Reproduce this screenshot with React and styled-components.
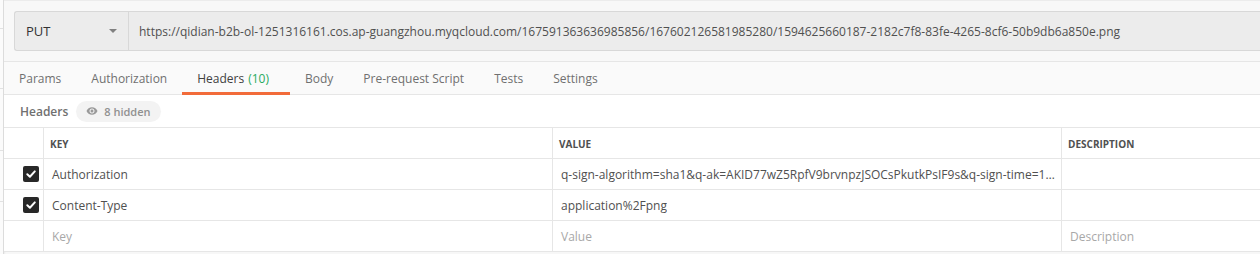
import React from 'react';
import styled, { createGlobalStyle } from 'styled-components';

const GlobalStyle = createGlobalStyle`
  html, body {
    margin: 0;
    padding: 0;
    background: #f7f7f7;
  }
  body {
    font-family: "Open Sans", "Liberation Sans", sans-serif;
    font-size: 12px;
    color: #505050;
  }
`;

const Page = styled.div`
  display: flex;
  width: 1260px;
  height: 254px;
  overflow: hidden;
`;

const SideStrip = styled.div`
  width: 3px;
  flex-shrink: 0;
  display: flex;
  flex-direction: column;
  background: #fbfbfb;
  border-right: 1px solid #dcdcdc;
  box-shadow: 1px 0 2px rgba(0, 0, 0, 0.06);
`;

const StripCell = styled.div`
  height: ${(p) => p.h}px;
  flex-shrink: 0;
  border-bottom: 1px solid #e2e2e2;
`;

const Main = styled.div`
  flex: 1;
  min-width: 0;
  display: flex;
  flex-direction: column;
`;

const RequestSection = styled.div`
  background: #f8f8f8;
  border-top: 1px solid #ececec;
  padding: 10px 0 10px 10px;
`;

const UrlBar = styled.div`
  display: flex;
  height: 38px;
  background: #ececec;
  border: 1px solid #d8d8d8;
  border-right: none;
  border-radius: 3px 0 0 3px;
`;

const MethodSelect = styled.div`
  width: 114px;
  flex-shrink: 0;
  display: flex;
  align-items: center;
  justify-content: space-between;
  padding: 0 11px 0 11px;
  box-sizing: border-box;
  border-right: 1px solid #d8d8d8;
  font-size: 13px;
  color: #333;
`;

const Caret = styled.span`
  width: 0;
  height: 0;
  border-left: 4px solid transparent;
  border-right: 4px solid transparent;
  border-top: 4px solid #808080;
`;

const UrlText = styled.div`
  flex: 1;
  display: flex;
  align-items: center;
  padding-left: 10px;
  white-space: nowrap;
  overflow: hidden;
  color: #505050;
`;

const TabBar = styled.div`
  display: flex;
  height: 32px;
  background: #fafafa;
  border-top: 1px solid #e6e6e6;
  border-bottom: 1px solid #e6e6e6;
`;

const Tab = styled.div`
  display: flex;
  align-items: center;
  padding: 0 ${(p) => (p.active ? 21 : 15)}px 0 15px;
  color: ${(p) => (p.active ? '#404040' : '#707070')};
  border-bottom: 3px solid ${(p) => (p.active ? '#f26b3a' : 'transparent')};
  margin-bottom: -1px;
  padding-top: 2px;
  white-space: nowrap;
`;

const Count = styled.span`
  color: #2bab5e;
  margin-left: 4px;
`;

const SectionHead = styled.div`
  display: flex;
  align-items: center;
  height: 32px;
  background: #fff;
  padding-left: 16px;
  gap: 8px;
`;

const SectionTitle = styled.span`
  color: #707070;
  font-weight: 600;
`;

const HiddenPill = styled.span`
  display: inline-flex;
  align-items: center;
  gap: 6px;
  height: 21px;
  padding: 0 10px;
  border-radius: 11px;
  background: #f3f3f3;
  color: #909090;
  font-weight: 600;
  font-size: 11px;
`;

const Table = styled.div`
  display: grid;
  grid-template-columns: 40px 509px 509px 1fr;
  background: #fff;
  border-top: 1px solid #e6e6e6;
`;

const Cell = styled.div`
  height: 30px;
  display: flex;
  align-items: center;
  padding: 0 ${(p) => (p.tight ? 1 : 8)}px 0 8px;
  box-sizing: content-box;
  border-bottom: 1px solid #e6e6e6;
  border-right: ${(p) => (p.last ? 'none' : '1px solid #e6e6e6')};
  color: ${(p) => (p.placeholder ? '#a8a8a8' : '#505050')};
  white-space: nowrap;
  overflow: hidden;
  min-width: 0;
`;

const HeadCell = styled(Cell)`
  font-size: 10px;
  font-weight: 700;
  padding-left: 6px;
  padding-top: 1px;
  height: 29px;
`;

const CheckCell = styled(Cell)`
  justify-content: flex-end;
  padding: 0 4px 0 0;
`;

const Ellipsis = styled.span`
  overflow: hidden;
  text-overflow: ellipsis;
  white-space: nowrap;
  display: block;
  min-width: 0;
`;

const CheckBox = styled.span`
  width: 16px;
  height: 16px;
  border-radius: 2px;
  background: #282828;
  display: flex;
  align-items: center;
  justify-content: center;
`;

const EyeIcon = () => (
  <svg width="12" height="12" viewBox="0 0 24 24" fill="#9a9a9a">
    <path d="M12 4.5C7 4.5 2.73 7.61 1 12c1.73 4.39 6 7.5 11 7.5s9.27-3.11 11-7.5c-1.73-4.39-6-7.5-11-7.5zM12 17c-2.76 0-5-2.24-5-5s2.24-5 5-5 5 2.24 5 5-2.24 5-5 5zm0-8c-1.66 0-3 1.34-3 3s1.34 3 3 3 3-1.34 3-3-1.34-3-3-3z" />
  </svg>
);

const Check = () => (
  <CheckBox>
    <svg width="12" height="12" viewBox="0 0 12 12">
      <path d="M2.3 6.2 L4.9 8.7 L9.8 3.4" stroke="#fff" strokeWidth="2" fill="none" strokeLinecap="round" strokeLinejoin="round" />
    </svg>
  </CheckBox>
);

const tabs = ['Params', 'Authorization', 'Headers', 'Body', 'Pre-request Script', 'Tests', 'Settings'];

const url =
  'https://qidian-b2b-ol-1251316161.cos.ap-guangzhou.myqcloud.com/167591363636985856/167602126581985280/1594625660187-2182c7f8-83fe-4265-8cf6-50b9db6a850e.png';

const authValue =
  'q-sign-algorithm=sha1&q-ak=AKID77wZ5RpfV9brvnpzJSOCsPkutkPsIF9s&q-sign-time=1594625660;1594629260&q-key-time=1594625660;1594629260&q-header-list=&q-url-param-list=&q-signature=';

const rows = [
  { key: 'Authorization', value: authValue },
  { key: 'Content-Type', value: 'application%2Fpng' },
];

const App = () => (
  <>
    <GlobalStyle />
    <Page>
      <SideStrip>
        <StripCell h={28} />
        <StripCell h={59} />
        <StripCell h={61} />
        <StripCell h={50} />
      </SideStrip>
      <Main>
        <RequestSection>
          <UrlBar>
            <MethodSelect>
              PUT
              <Caret />
            </MethodSelect>
            <UrlText>{url}</UrlText>
          </UrlBar>
        </RequestSection>

        <TabBar>
          {tabs.map((t) => (
            <Tab key={t} active={t === 'Headers'}>
              {t}
              {t === 'Headers' && <Count>(10)</Count>}
            </Tab>
          ))}
        </TabBar>

        <SectionHead>
          <SectionTitle>Headers</SectionTitle>
          <HiddenPill>
            <EyeIcon />
            8 hidden
          </HiddenPill>
        </SectionHead>

        <Table>
          <HeadCell />
          <HeadCell>KEY</HeadCell>
          <HeadCell>VALUE</HeadCell>
          <HeadCell last>DESCRIPTION</HeadCell>

          {rows.map((r) => (
            <React.Fragment key={r.key}>
              <CheckCell>
                <Check />
              </CheckCell>
              <Cell>{r.key}</Cell>
              <Cell tight>
                <Ellipsis>{r.value}</Ellipsis>
              </Cell>
              <Cell last />
            </React.Fragment>
          ))}

          <CheckCell />
          <Cell placeholder>Key</Cell>
          <Cell placeholder>Value</Cell>
          <Cell last placeholder>Description</Cell>
        </Table>
      </Main>
    </Page>
  </>
);

export default App;
